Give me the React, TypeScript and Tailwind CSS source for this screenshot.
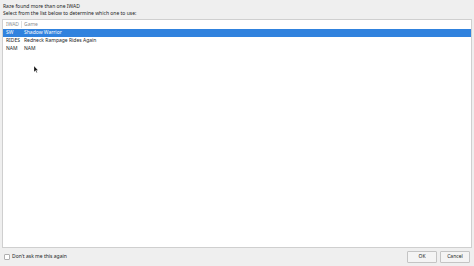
import React from "react";

const rows = [
  { iwad: "SW", game: "Shadow Warrior" },
  { iwad: "RIDES", game: "Redneck Rampage Rides Again" },
  { iwad: "NAM", game: "NAM" },
];

export default function App() {
  return (
    <div
      className="relative flex h-[266px] w-[474px] flex-col bg-[#efefef] text-[5px] text-[#1b1d1e]"
      style={{ fontFamily: '"Noto Sans", sans-serif' }}
    >
      <div className="px-[3px] pt-[3px] leading-[7px]">
        <p>Raze found more than one IWAD</p>
        <p>Select from the list below to determine which one to use:</p>
      </div>

      <div className="mx-[2px] mt-[2px] flex-1 border border-[#cfcfcf] bg-white">
        <div className="flex h-[9px] items-center bg-white text-[#8a8d8f]">
          <div className="w-[19px] border-r border-[#e0e0e0] pl-[3px]">IWAD</div>
          <div className="pl-[2px]">Game</div>
        </div>
        {rows.map((row, i) => (
          <div
            key={row.iwad}
            className={
              i === 0
                ? "flex h-[8px] items-center bg-[#3082de] text-white"
                : "flex h-[8px] items-center"
            }
          >
            <div className="w-[19px] pl-[3px]">{row.iwad}</div>
            <div className="pl-[2px]">{row.game}</div>
          </div>
        ))}
      </div>

      <div className="flex h-[18px] items-center justify-between px-[4px]">
        <label className="flex items-center gap-[2px]">
          <span className="h-[6px] w-[6px] rounded-[1px] border border-[#b0b0b0] bg-white" />
          <span>Don&apos;t ask me this again</span>
        </label>
        <div className="flex gap-[3px]">
          <button className="h-[12px] w-[30px] rounded-[1px] border border-[#c4c4c4] bg-[#f4f4f4]">
            OK
          </button>
          <button className="h-[12px] w-[30px] rounded-[1px] border border-[#c4c4c4] bg-[#f4f4f4]">
            Cancel
          </button>
        </div>
      </div>

      <svg
        className="absolute left-[34px] top-[66px]"
        width="4"
        height="7"
        viewBox="0 0 4 7"
      >
        <path d="M0 0 L0 6 L1.5 4.6 L2.6 6.8 L3.3 6.4 L2.3 4.3 L4 4.2 Z" fill="#111" stroke="#fff" strokeWidth="0.3" />
      </svg>
    </div>
  );
}
